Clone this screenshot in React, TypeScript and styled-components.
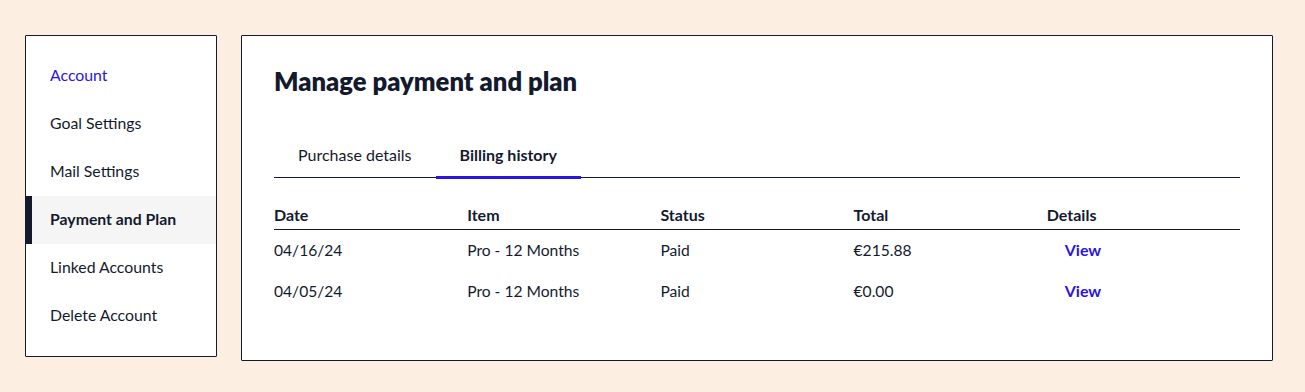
import React, { useState } from "react";
import styled, { createGlobalStyle } from "styled-components";

const GlobalStyle = createGlobalStyle`
  html, body { margin: 0; padding: 0; }
  body {
    background: #fdeee2;
    font-family: "Lato", "Noto Sans", sans-serif;
    color: #141a2e;
  }
  * { box-sizing: border-box; }
`;

const Page = styled.div`
  display: flex;
  align-items: flex-start;
  gap: 24px;
  padding: 35px 0 0 25px;
  height: 392px;
`;

const Sidebar = styled.nav`
  width: 192px;
  flex: none;
  background: #fff;
  border: 1px solid #141a2e;
  border-radius: 1px;
  padding: 16px 0;
  display: flex;
  flex-direction: column;
`;

const NavItem = styled.a<{ $active?: boolean; $current?: boolean }>`
  height: 48px;
  display: flex;
  align-items: center;
  font-size: 15.8px;
  text-decoration: none;
  cursor: pointer;
  color: ${(p) => (p.$current ? "#2a14e6" : "#141a2e")};
  font-weight: ${(p) => (p.$active ? 700 : 400)};
  background: ${(p) => (p.$active ? "#f5f5f5" : "transparent")};
  border-left: 6px solid ${(p) => (p.$active ? "#141a2e" : "transparent")};
  padding: 0 0 3px 18px;
`;

const Main = styled.section`
  width: 1032px;
  height: 326px;
  flex: none;
  background: #fff;
  border: 1px solid #141a2e;
  border-radius: 1px;
  padding: 29px 32px 0 32px;
`;

const Title = styled.h1`
  margin: 0;
  font-size: 25.6px;
  line-height: 32px;
  font-weight: 800;
`;

const Tabs = styled.div`
  display: flex;
  margin-top: 36px;
  border-bottom: 1px solid #141a2e;
`;

const Tab = styled.button<{ $active?: boolean }>`
  background: none;
  border: none;
  padding: 0 24px 2px;
  height: 44px;
  font-family: inherit;
  font-size: 16px;
  color: #141a2e;
  font-weight: ${(p) => (p.$active ? 700 : 400)};
  cursor: pointer;
  position: relative;
  &::after {
    content: "";
    position: absolute;
    left: 0;
    right: 0;
    bottom: -2px;
    height: 3px;
    background: ${(p) => (p.$active ? "#2a14e6" : "transparent")};
  }
`;

const Table = styled.table`
  width: 100%;
  border-collapse: collapse;
  margin-top: 25px;
  table-layout: fixed;
`;

const Th = styled.th`
  text-align: left;
  font-size: 16px;
  font-weight: 700;
  padding: 0 0 3px 0;
  height: 26px;
  border-bottom: 1px solid #141a2e;
`;

const Td = styled.td`
  font-size: 15.6px;
  height: 41px;
  padding: 0;
  vertical-align: middle;
`;

const ViewLink = styled.a`
  color: #2a14e6;
  font-weight: 700;
  font-size: 16px;
  margin-left: 18px;
  text-decoration: none;
  cursor: pointer;
`;

const navItems = [
  "Account",
  "Goal Settings",
  "Mail Settings",
  "Payment and Plan",
  "Linked Accounts",
  "Delete Account",
];

const rows = [
  { date: "04/16/24", item: "Pro - 12 Months", status: "Paid", total: "€215.88" },
  { date: "04/05/24", item: "Pro - 12 Months", status: "Paid", total: "€0.00" },
];

export default function App() {
  const [tab, setTab] = useState(1);
  return (
    <>
      <GlobalStyle />
      <Page>
        <Sidebar>
          {navItems.map((n, i) => (
            <NavItem key={n} $current={i === 0} $active={i === 3}>
              {n}
            </NavItem>
          ))}
        </Sidebar>
        <Main>
          <Title>Manage payment and plan</Title>
          <Tabs>
            {["Purchase details", "Billing history"].map((t, i) => (
              <Tab key={t} $active={tab === i} onClick={() => setTab(i)}>
                {t}
              </Tab>
            ))}
          </Tabs>
          <Table>
            <thead>
              <tr>
                <Th>Date</Th>
                <Th>Item</Th>
                <Th>Status</Th>
                <Th>Total</Th>
                <Th>Details</Th>
              </tr>
            </thead>
            <tbody>
              {rows.map((r) => (
                <tr key={r.date}>
                  <Td>{r.date}</Td>
                  <Td>{r.item}</Td>
                  <Td>{r.status}</Td>
                  <Td>{r.total}</Td>
                  <Td>
                    <ViewLink>View</ViewLink>
                  </Td>
                </tr>
              ))}
            </tbody>
          </Table>
        </Main>
      </Page>
    </>
  );
}
